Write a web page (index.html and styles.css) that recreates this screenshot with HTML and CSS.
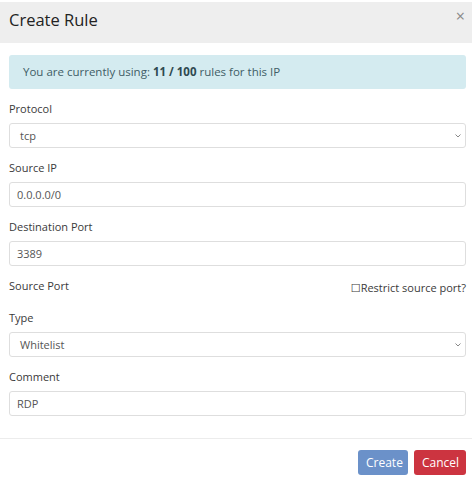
FILE: index.html
```html
<!DOCTYPE html>
<html>
<head>
<meta charset="utf-8">
<link rel="stylesheet" href="styles.css">
</head>
<body>
<div class="modal">
  <div class="modal-header">
    <h5 class="modal-title">Create Rule</h5>
    <span class="close">×</span>
  </div>
  <div class="modal-body">
    <div class="alert">You are currently using: <b>11 / 100</b> rules for this IP</div>
    <div class="group">
      <label class="lbl">Protocol</label>
      <div class="control select"><span>tcp</span><svg class="caret" width="6" height="4" viewBox="0 0 6 4"><path d="M0.5 0.5 L3 3 L5.5 0.5" fill="none" stroke="#888" stroke-width="1"/></svg></div>
    </div>
    <div class="group">
      <label class="lbl">Source IP</label>
      <div class="control">0.0.0.0/0</div>
    </div>
    <div class="group">
      <label class="lbl">Destination Port</label>
      <div class="control">3389</div>
    </div>
    <div class="group row">
      <label class="lbl">Source Port</label>
      <span class="check">☐Restrict source port?</span>
    </div>
    <div class="group">
      <label class="lbl">Type</label>
      <div class="control select"><span>Whitelist</span><svg class="caret" width="6" height="4" viewBox="0 0 6 4"><path d="M0.5 0.5 L3 3 L5.5 0.5" fill="none" stroke="#888" stroke-width="1"/></svg></div>
    </div>
    <div class="group">
      <label class="lbl">Comment</label>
      <div class="control">RDP</div>
    </div>
  </div>
  <div class="modal-footer">
    <button class="btn btn-primary">Create</button>
    <button class="btn btn-danger">Cancel</button>
  </div>
</div>
</body>
</html>
```

FILE: styles.css
```css
html, body {
  margin: 0;
  padding: 0;
  background: #ffffff;
}
body {
  font-family: "Open Sans", "DejaVu Sans", sans-serif;
  color: #333;
}
.modal {
  width: 472px;
}
.modal-header {
  margin-top: 2px;
  height: 41px;
  box-sizing: border-box;
  padding: 8px 9px 13px 9px;
  background: #eeeeee;
  display: flex;
  justify-content: space-between;
  align-items: flex-start;
}
.modal-title {
  margin: 0;
  font-size: 16.5px;
  font-weight: 400;
  line-height: 20px;
  color: #222;
}
.close {
  font-size: 16px;
  line-height: 16px;
  color: #888;
  margin-top: -2px;
  margin-right: -2px;
}
.modal-body {
  padding: 12px 6px 12px 9px;
}
.alert {
  height: 34px;
  box-sizing: border-box;
  padding: 7px 14px;
  line-height: 20px;
  font-size: 11.5px;
  background: #d4ebf0;
  color: #3f5d66;
  border-radius: 3px;
  margin-bottom: 10px;
}
.alert b {
  font-weight: 700;
  color: #2f4950;
}
.group {
  margin-bottom: 10px;
}
.lbl {
  display: block;
  font-size: 11px;
  line-height: 20px;
  margin-bottom: 4px;
  color: #3a3a3a;
}
.control {
  height: 25px;
  box-sizing: border-box;
  border: 1px solid #dedede;
  border-radius: 3px;
  padding: 0 7px;
  font-size: 11px;
  line-height: 23px;
  color: #555;
  display: flex;
  align-items: center;
  justify-content: space-between;
}
.select {
  padding-left: 10px;
  padding-right: 4px;
}
.caret {
  display: block;
}
.row {
  display: flex;
  justify-content: space-between;
  align-items: flex-end;
  height: 22px;
}
.row .lbl {
  margin-bottom: 0;
  align-self: flex-start;
}
.check {
  font-size: 11px;
  line-height: 20px;
  color: #3a3a3a;
}
.modal-footer {
  border-top: 1px solid #ececec;
  padding: 11px 6px 6px 0;
  display: flex;
  justify-content: flex-end;
  gap: 6px;
}
.btn {
  height: 25px;
  border: none;
  border-radius: 3px;
  font-family: "Open Sans", "DejaVu Sans", sans-serif;
  font-size: 12px;
  color: #fff;
  padding: 0 8px;
}
.btn-primary {
  background: #6b91c9;
  width: 50px;
}
.btn-danger {
  background: #cc3440;
  width: 52px;
}
```
